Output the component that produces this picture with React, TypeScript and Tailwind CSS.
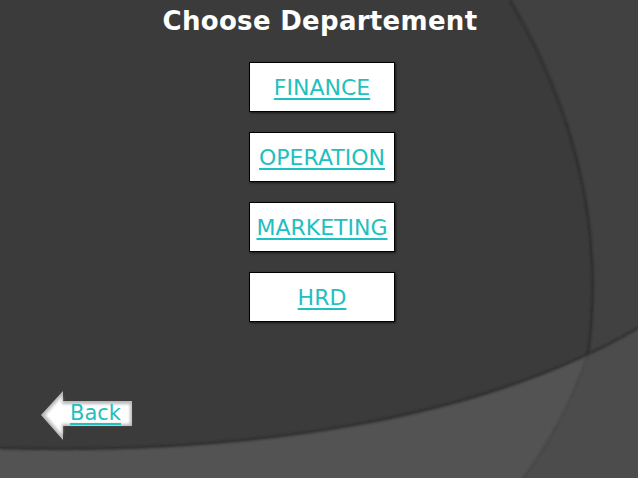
import React from "react";

const departments = ["FINANCE", "OPERATION", "MARKETING", "HRD"];

const Background = () => (
  <svg
    className="absolute inset-0"
    width="638"
    height="478"
    viewBox="0 0 638 478"
    aria-hidden="true"
  >
    <defs>
      <filter id="soft" x="-10%" y="-10%" width="120%" height="120%">
        <feGaussianBlur stdDeviation="1.2" />
      </filter>
    </defs>
    <rect width="638" height="478" fill="#3b3b3b" />
    <path d="M510,0 C575,110 605,230 588,354 L638,328 L638,0 Z" fill="#414141" />
    <path
      d="M510,0 C575,110 605,230 588,354"
      fill="none"
      stroke="#2c2c2c"
      strokeWidth="2"
      filter="url(#soft)"
    />
    <path d="M0,448 C250,455 480,420 638,328 L638,478 L0,478 Z" fill="#535353" />
    <path d="M588,354 C572,400 552,440 523,478 L638,478 L638,328 Z" fill="#4c4c4c" />
    <path
      d="M588,354 C572,400 552,440 523,478"
      fill="none"
      stroke="#444444"
      strokeWidth="1.5"
      filter="url(#soft)"
    />
    <path
      d="M0,448 C250,455 480,420 638,328"
      fill="none"
      stroke="#2e2e2e"
      strokeWidth="2.5"
      filter="url(#soft)"
    />
  </svg>
);

const BackArrow = () => (
  <svg
    className="absolute inset-0"
    width="92"
    height="50"
    viewBox="0 0 92 50"
    aria-hidden="true"
  >
    <defs>
      <filter id="bevel" x="-10%" y="-10%" width="120%" height="120%">
        <feGaussianBlur stdDeviation="1.6" />
      </filter>
    </defs>
    <path d="M0,24 L22,0 L22,10 L91,10 L91,35 L22,35 L22,49 Z" fill="#b9b9b9" />
    <path
      d="M4,24 L21,5 L21,13 L89,13 L89,33 L21,33 L21,44 Z"
      fill="#ffffff"
      filter="url(#bevel)"
    />
  </svg>
);

export default function App() {
  return (
    <div
      className="relative w-[638px] h-[478px] overflow-hidden bg-[#3b3b3b]"
      style={{ fontFamily: '"DejaVu Sans", sans-serif' }}
    >
      <Background />
      <div className="relative flex flex-col h-full">
        <h1 className="text-center text-white font-bold text-[26px] leading-none pt-[8px] pl-[2px] h-[62px] tracking-[0.3px]">
          Choose Departement
        </h1>
        <div className="flex flex-col items-center gap-[20px] pl-[6px]">
          {departments.map((d) => (
            <a
              key={d}
              href="#"
              className="w-[146px] h-[50px] bg-white border border-black shadow-[1px_1px_2px_rgba(0,0,0,0.6)] flex items-center justify-center text-[#1fc0c0] text-[22px] underline underline-offset-[3px] decoration-[2px]"
            >
              {d}
            </a>
          ))}
        </div>
        <div className="mt-auto pl-[41px] pb-[37px]">
          <a href="#" className="relative block w-[92px] h-[50px]">
            <BackArrow />
            <span className="relative block pl-[29px] pt-[12px] text-[#1fc0c0] text-[21px] leading-none underline underline-offset-[3px] decoration-[2px]">
              Back
            </span>
          </a>
        </div>
      </div>
    </div>
  );
}
